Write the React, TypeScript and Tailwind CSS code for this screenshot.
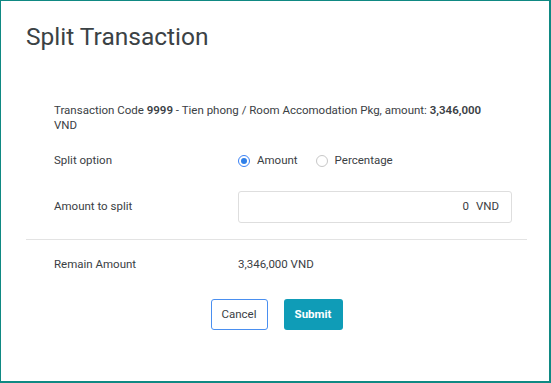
import { useState } from "react";

const SplitTransaction = () => {
  const [option, setOption] = useState("amount");

  return (
    <div className="w-[551px] h-[383px] bg-white border-l border-t border-r-2 border-b-2 border-[#0f8983] font-['Roboto',sans-serif] text-[#3a4044]">
      <div className="pl-[25px] pr-[22px] pt-[20px]">
        <h1 className="text-[24.5px] leading-[32px] text-[#3b4245]">Split Transaction</h1>

        <div className="mt-[50px] pl-[28px] pr-[15px]">
          <p className="w-[440px] text-[11.5px] leading-[15px]">
            Transaction Code <span className="font-semibold">9999</span> - Tien phong / Room Accomodation Pkg, amount:{" "}
            <span className="font-semibold">3,346,000</span> VND
          </p>

          <div className="mt-[17px] flex items-center h-[22px]">
            <div className="w-[184px] text-[11.5px]">Split option</div>
            <label className="flex items-center gap-[7px] text-[11.5px] cursor-pointer" onClick={() => setOption("amount")}>
              <span
                className={`w-[12px] h-[12px] rounded-full border flex items-center justify-center ${
                  option === "amount" ? "border-[#3b82f6]" : "border-[#c7c7c7]"
                }`}
              >
                {option === "amount" && <span className="w-[6px] h-[6px] rounded-full bg-[#2f7fe8]" />}
              </span>
              Amount
            </label>
            <label className="ml-[18px] flex items-center gap-[7px] text-[11.5px] cursor-pointer" onClick={() => setOption("percentage")}>
              <span
                className={`w-[12px] h-[12px] rounded-full border flex items-center justify-center ${
                  option === "percentage" ? "border-[#3b82f6]" : "border-[#c7c7c7]"
                }`}
              >
                {option === "percentage" && <span className="w-[6px] h-[6px] rounded-full bg-[#2f7fe8]" />}
              </span>
              Percentage
            </label>
          </div>

          <div className="mt-[19px] flex items-center">
            <div className="w-[184px] text-[11.5px]">Amount to split</div>
            <div className="flex-1 h-[32px] border border-[#dedede] rounded-[3px] flex items-center justify-end pr-[12px] text-[11.5px]">
              <span>0</span>
              <span className="ml-[7px]">VND</span>
            </div>
          </div>
        </div>

        <div className="mt-[16px] border-t border-[#e3e3e3]" />

        <div className="mt-[16px] pl-[28px] flex items-center text-[11.5px]">
          <div className="w-[184px]">Remain Amount</div>
          <div>3,346,000 VND</div>
        </div>

        <div className="mt-[26px] flex justify-center gap-[16px]">
          <button className="w-[57px] h-[31px] border border-[#4a8ff0] rounded-[3px] text-[11.5px] text-[#3a4044] bg-white">
            Cancel
          </button>
          <button className="w-[59px] h-[31px] rounded-[3px] bg-[#0f9cb7] text-white text-[11.5px] font-bold">
            Submit
          </button>
        </div>
      </div>
    </div>
  );
};

export default function App() {
  return <SplitTransaction />;
}
